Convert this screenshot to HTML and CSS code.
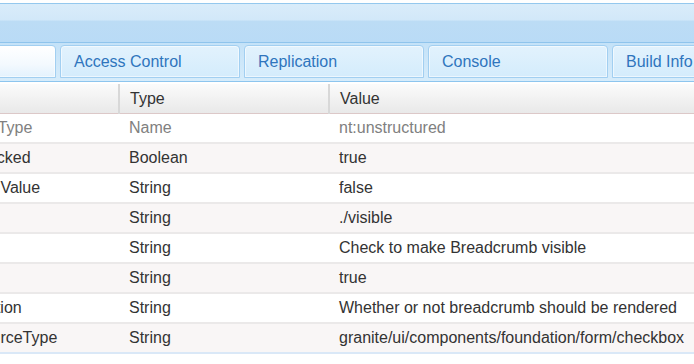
FILE: index.html
```html
<!DOCTYPE html>
<html lang="en">
<head>
    <meta charset="UTF-8">
    <meta name="viewport" content="width=device-width, initial-scale=1.0">
    <title>CRXDE Lite - Properties</title>
    <link rel="stylesheet" href="styles.css">
</head>
<body>
    <div class="painel">
        <div class="barra-topo"></div>

        <div class="abas">
            <div class="aba ativa">Properties</div>
            <div class="aba">Access Control</div>
            <div class="aba">Replication</div>
            <div class="aba">Console</div>
            <div class="aba">Build Info</div>
        </div>

        <table class="propriedades">
            <thead>
                <tr>
                    <th class="col-nome">Name</th>
                    <th class="col-tipo">Type</th>
                    <th class="col-valor">Value</th>
                </tr>
            </thead>
            <tbody>
                <tr class="protegida">
                    <td>jcr:primaryType</td>
                    <td>Name</td>
                    <td>nt:unstructured</td>
                </tr>
                <tr>
                    <td>defaultchecked</td>
                    <td>Boolean</td>
                    <td>true</td>
                </tr>
                <tr>
                    <td>uncheckedValue</td>
                    <td>String</td>
                    <td>false</td>
                </tr>
                <tr>
                    <td>name</td>
                    <td>String</td>
                    <td>./visible</td>
                </tr>
                <tr>
                    <td>text</td>
                    <td>String</td>
                    <td>Check to make Breadcrumb visible</td>
                </tr>
                <tr>
                    <td>value</td>
                    <td>String</td>
                    <td>true</td>
                </tr>
                <tr>
                    <td>jcr:description</td>
                    <td>String</td>
                    <td>Whether or not breadcrumb should be rendered</td>
                </tr>
                <tr class="selecionada">
                    <td>sling:resourceType</td>
                    <td>String</td>
                    <td>granite/ui/components/foundation/form/checkbox</td>
                </tr>
            </tbody>
        </table>
    </div>
</body>
</html>
```

FILE: styles.css
```css
body {
    margin: 0;
    background-color: #fff;
    font-family: "Liberation Sans", Arial, sans-serif;
    overflow: hidden;
}

/* o painel começa fora da tela, a coluna Name fica cortada */
.painel {
    margin-left: -124px;
    width: 1000px;
}

.barra-topo {
    height: 38px;
    margin-top: 3px;
    border-top: 1px solid #94c8ee;
    border-bottom: 1px solid #8fc4ec;
    background: linear-gradient(to bottom, #d9ecfa 0%, #d2e8f9 42%, #bcdcf5 45%, #b9dbf6 100%);
}

.abas {
    display: flex;
    gap: 4px;
    padding-top: 2px;
    padding-bottom: 3px;
    background: linear-gradient(to bottom, #c4e2f8 0%, #d6ecfb 100%);
    border-bottom: 1px solid #8dc5ee;
    margin-bottom: 2px;
}

.aba {
    width: 165px;
    height: 31px;
    padding-left: 13px;
    line-height: 32px;
    font-size: 16px;
    color: #2f75bd;
    border: 1px solid #a2cff1;
    border-radius: 4px 4px 0 0;
    box-shadow: inset 0 0 0 1px rgba(255, 255, 255, 0.55);
    background: linear-gradient(to bottom, #e2f2fd 0%, #d4ecfc 100%);
    white-space: nowrap;
    overflow: hidden;
}

.aba.ativa {
    color: #1d5fa3;
    background: linear-gradient(to bottom, #ffffff 0%, #f3f9fe 60%, #e3f2fd 100%);
}

.propriedades {
    border-collapse: collapse;
    table-layout: fixed;
    width: 1000px;
    font-size: 16px;
    color: #333;
}

.propriedades th {
    height: 29px;
    padding: 0 10px;
    text-align: left;
    font-weight: normal;
    color: #333;
    background: linear-gradient(to bottom, #fbfbfb 0%, #f0f0f0 60%, #e9e9e9 100%);
    border-right: 2px solid #d8d8d8;
    border-bottom: 1px solid #dcc8c8;
}

.col-nome {
    width: 222px;
}

.col-tipo {
    width: 188px;
}

.propriedades td {
    height: 28px;
    padding: 0 10px;
    white-space: nowrap;
    overflow: hidden;
    border-bottom: 2px solid #ebe9e9;
}

.propriedades td:first-child {
    padding-left: 47px;
}

.propriedades tbody tr:nth-child(even) td {
    background-color: #f9f6f6;
}

.propriedades tr.protegida td {
    color: #808080;
}

.propriedades tr.selecionada td {
    background-color: #dae8f7;
    border-bottom-color: #dae8f7;
}
```
